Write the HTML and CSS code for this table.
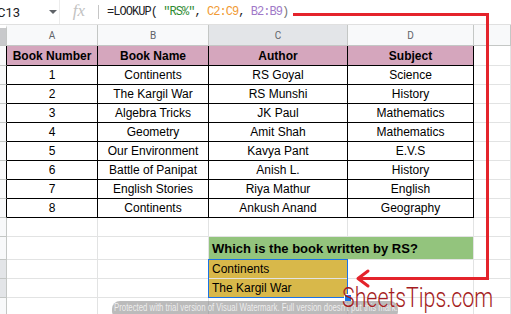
FILE: index.html
```html
<!DOCTYPE html>
<html>
<head>
<meta charset="utf-8">
<link rel="stylesheet" href="styles.css">
</head>
<body>
<div class="page">
  <div class="fbar">
    <div class="namebox"><span class="nb-text">C13</span><span class="caret"></span></div>
    <div class="fx">fx</div>
    <div class="sep"></div>
    <div class="formula">=LOOKUP( <span class="g">"RS%"</span>, <span class="o">C2:C9</span>, <span class="p">B2:B9</span><span class="paren">)</span></div>
  </div>
  <div class="sheet">
    <div class="corner"></div>
    <div class="colh">A</div><div class="colh">B</div><div class="colh sel">C</div><div class="colh">D</div><div class="colh"></div>

    <div class="rn t"></div>
    <div class="c t th">Book Number</div><div class="c t th">Book Name</div><div class="c t th">Author</div><div class="c t th">Subject</div><div class="c"></div>

    <div class="rn t"></div><div class="c t">1</div><div class="c t">Continents</div><div class="c t">RS Goyal</div><div class="c t">Science</div><div class="c"></div>
    <div class="rn t"></div><div class="c t">2</div><div class="c t">The Kargil War</div><div class="c t">RS Munshi</div><div class="c t">History</div><div class="c"></div>
    <div class="rn t"></div><div class="c t">3</div><div class="c t">Algebra Tricks</div><div class="c t">JK Paul</div><div class="c t">Mathematics</div><div class="c"></div>
    <div class="rn t"></div><div class="c t">4</div><div class="c t">Geometry</div><div class="c t">Amit Shah</div><div class="c t">Mathematics</div><div class="c"></div>
    <div class="rn t"></div><div class="c t">5</div><div class="c t">Our Environment</div><div class="c t">Kavya Pant</div><div class="c t">E.V.S</div><div class="c"></div>
    <div class="rn t"></div><div class="c t">6</div><div class="c t">Battle of Panipat</div><div class="c t">Anish L.</div><div class="c t">History</div><div class="c"></div>
    <div class="rn t"></div><div class="c t">7</div><div class="c t">English Stories</div><div class="c t">Riya Mathur</div><div class="c t">English</div><div class="c"></div>
    <div class="rn t"></div><div class="c t">8</div><div class="c t">Continents</div><div class="c t">Ankush Anand</div><div class="c t">Geography</div><div class="c"></div>

    <div class="rn"></div><div class="c"></div><div class="c"></div><div class="c"></div><div class="c"></div><div class="c"></div>

    <div class="rn"></div><div class="c"></div><div class="c"></div><div class="c q">Which is the book written by RS?</div><div class="c"></div>

    <div class="rn rs"></div><div class="c"></div><div class="c"></div><div class="c y">Continents</div><div class="c"></div><div class="c"></div>
    <div class="rn rs"></div><div class="c"></div><div class="c"></div><div class="c y">The Kargil War</div><div class="c"></div><div class="c"></div>
    <div class="rn"></div><div class="c"></div><div class="c"></div><div class="c"></div><div class="c"></div><div class="c"></div>
  </div>

  <div class="selbox"></div>
  <div class="handle"></div>

  <svg class="arrow" width="511" height="314" viewBox="0 0 511 314">
    <polyline points="293,14.5 487.5,14.5 487.5,278.5 358,278.5" fill="none" stroke="#e4232b" stroke-width="3" stroke-linejoin="miter"/>
    <polyline points="368,271 358,278.5 368,286" fill="none" stroke="#e4232b" stroke-width="3" stroke-linecap="round" stroke-linejoin="round"/>
  </svg>

  <div class="watermark"><span class="wm-text">Protected with trial version of Visual Watermark. Full version doesn't put this mark.</span></div>
  <div class="logo">SheetsTips.com</div>
</div>
</body>
</html>
```
FILE: styles.css
```css
html, body {
  margin: 0;
  padding: 0;
  width: 511px;
  height: 314px;
  overflow: hidden;
  background: #fff;
}
.page {
  position: relative;
  width: 511px;
  height: 314px;
  overflow: hidden;
  font-family: "Liberation Sans", Arial, sans-serif;
  color: #000;
}
.fbar {
  height: 24px;
  border-top: 1px solid #e6e6e6;
  border-bottom: 1px solid #e0e0e0;
  box-sizing: content-box;
  display: flex;
  align-items: center;
  margin-top: -1px;
}
.namebox {
  width: 60px;
  height: 24px;
  display: flex;
  align-items: center;
  box-sizing: border-box;
  border-right: 1px solid #ececec;
  position: relative;
}
.nb-text {
  font-family: Roboto, "Liberation Sans", sans-serif;
  font-size: 13px;
  color: #202124;
  margin-left: -3px;
}
.caret {
  margin-left: 29px;
  width: 0;
  height: 0;
  border-left: 4px solid transparent;
  border-right: 4px solid transparent;
  border-top: 4px solid #5f6368;
}
.fx {
  width: 38px;
  text-align: center;
  font-family: "Liberation Serif", serif;
  font-style: italic;
  font-size: 17px;
  color: #c2c2c2;
  line-height: 24px;
  margin-top: -2px;
}
.sep {
  width: 1px;
  height: 14px;
  background: #c6c6c6;
  margin-right: 8px;
}
.formula {
  font-family: "Liberation Mono", "DejaVu Sans Mono", monospace;
  font-size: 12px;
  letter-spacing: -0.95px;
  color: #202124;
  white-space: pre;
}
.formula .g { color: #2e8b32; }
.formula .o { color: #f19b35; }
.formula .p { color: #a079c8; }
.formula .paren { color: #777; }

.sheet {
  display: grid;
  grid-template-columns: 7px 91px 111px 139px 126px 1fr;
  grid-template-rows: 21px 20px repeat(8, 19px) 19px 23px 19px 19px 30px;
}
.sheet > div {
  box-sizing: border-box;
  border-right: 1px solid #e2e3e3;
  border-bottom: 1px solid #e2e3e3;
}
.corner {
  background: #c8c9cb;
  border-top: 3px solid #fff;
}
.sheet > .corner {
  border-right: 1px solid #c4c7c5;
  border-bottom: 1px solid #c4c7c5;
}
.sheet > .colh {
  background: #f8f9fa;
  border-right: 1px solid #c4c7c5;
  border-bottom: 1px solid #c4c7c5;
  font-family: Roboto, "Liberation Sans", sans-serif;
  font-size: 10px;
  color: #5f6368;
  display: flex;
  align-items: center;
  justify-content: center;
}
.sheet > .colh.sel {
  background: #e3e5e8;
}
.sheet > .rn {
  background: #f8f9fa;
  border-right: 1px solid #c4c7c5;
  border-bottom: 1px solid #c4c7c5;
}
.sheet > .rn.t {
  border-right: 1px solid #000;
}
.sheet > .rn.rs {
  background: #e3e5e8;
}
.c {
  font-size: 12px;
  display: flex;
  align-items: center;
  justify-content: center;
  white-space: nowrap;
  overflow: hidden;
}
.sheet > .c.t {
  border-right: 1px solid #000;
  border-bottom: 1px solid #000;
}
.sheet > .th {
  background: #d5a6bd;
  font-weight: bold;
}
.sheet > .q {
  grid-column: span 2;
  background: #93c47d;
  font-weight: bold;
  font-size: 13px;
  justify-content: flex-start;
  padding-left: 3px;
  padding-top: 1px;
}
.sheet > .y {
  background: #d8b84a;
  justify-content: flex-start;
  padding-left: 3px;
}
.selbox {
  position: absolute;
  left: 208px;
  top: 259px;
  width: 140px;
  height: 39px;
  box-sizing: border-box;
  border: 1px solid #1a73e8;
}
.handle {
  position: absolute;
  left: 344px;
  top: 294px;
  width: 6px;
  height: 6px;
  background: #1a73e8;
  border: 1px solid #fff;
  box-sizing: content-box;
}
.arrow {
  position: absolute;
  left: 0;
  top: 0;
}
.watermark {
  position: absolute;
  left: 112px;
  top: 301px;
  width: 286px;
  height: 18px;
  border-radius: 8px;
  background: rgba(120, 120, 120, 0.5);
  overflow: hidden;
  padding-left: 2px;
  box-sizing: border-box;
}
.wm-text {
  display: block;
  color: rgba(255, 255, 255, 0.75);
  font-family: "Liberation Sans", Arial, sans-serif;
  font-size: 10px;
  line-height: 14px;
  white-space: nowrap;
  transform: scaleX(0.78);
  transform-origin: left top;
}
.logo {
  position: absolute;
  left: 342px;
  top: 285px;
  font-family: Roboto, "Liberation Sans", sans-serif;
  font-weight: 300;
  font-size: 27px;
  line-height: 27px;
  color: #a51c21;
  white-space: nowrap;
  transform: scaleX(0.79);
  transform-origin: left top;
}
```
